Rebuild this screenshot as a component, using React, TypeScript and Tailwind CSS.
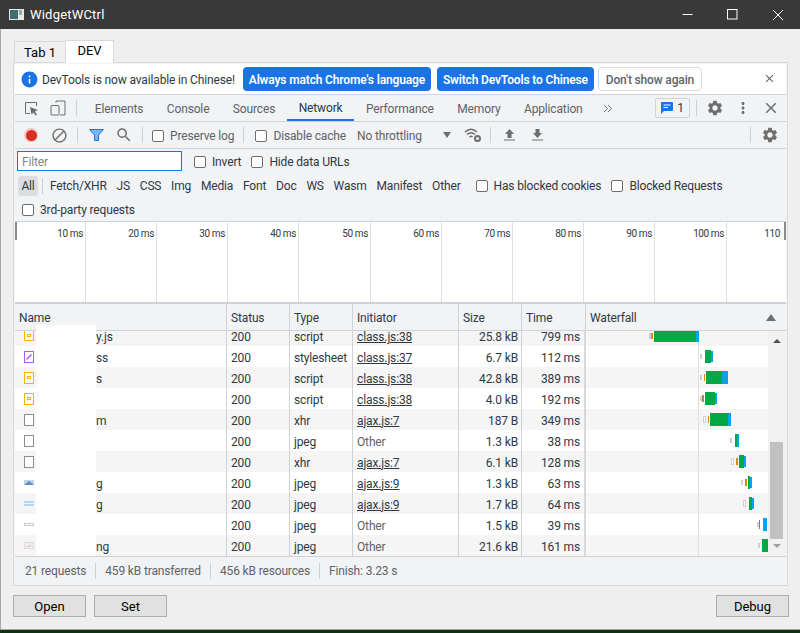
import { MdInfo, MdSettings, MdMoreVert, MdClose, MdBlock, MdSearch } from 'react-icons/md';

type Bar = { x: number; y: number; w: number; h: number; c: string; hollow?: boolean };

const G = '#00a846';
const B = '#00a4f0';
const O = '#d98800';
const L = '#d0d0d0';

// waterfall bars, x is relative to the column, y to the row
const rows: {
  name: string;
  icon: string;
  type: string;
  init: string;
  link: boolean;
  size: string;
  time: string;
  bars: Bar[];
}[] = [
  {
    name: 'y.js', icon: 'js', type: 'script', init: 'class.js:38', link: true, size: '25.8 kB', time: '799 ms',
    bars: [
      { x: 63, y: 2, w: 2, h: 6, c: L }, { x: 65, y: 2, w: 2, h: 6, c: O },
      { x: 68, y: 0, w: 42, h: 11, c: G }, { x: 110, y: 0, w: 3, h: 11, c: B },
    ],
  },
  {
    name: 'ss', icon: 'css', type: 'stylesheet', init: 'class.js:37', link: true, size: '6.7 kB', time: '112 ms',
    bars: [
      { x: 114, y: 8, w: 2, h: 5, c: L }, { x: 119, y: 4, w: 6, h: 13, c: G }, { x: 125, y: 5, w: 2, h: 11, c: B },
    ],
  },
  {
    name: 's', icon: 'js', type: 'script', init: 'class.js:38', link: true, size: '42.8 kB', time: '389 ms',
    bars: [
      { x: 114, y: 8, w: 2, h: 5, c: L }, { x: 118, y: 7, w: 1, h: 7, c: O },
      { x: 120, y: 4, w: 16, h: 13, c: G }, { x: 136, y: 4, w: 6, h: 13, c: '#0f9fe8' },
    ],
  },
  {
    name: '', icon: 'js', type: 'script', init: 'class.js:38', link: true, size: '4.0 kB', time: '192 ms',
    bars: [
      { x: 114, y: 8, w: 2, h: 5, c: L }, { x: 116, y: 7, w: 2, h: 7, c: '#a8865c' },
      { x: 119, y: 4, w: 10, h: 13, c: G }, { x: 129, y: 5, w: 2, h: 11, c: B },
    ],
  },
  {
    name: 'm', icon: 'doc', type: 'xhr', init: 'ajax.js:7', link: true, size: '187 B', time: '349 ms',
    bars: [
      { x: 117, y: 7, w: 3, h: 7, c: '#d0d0d0', hollow: true }, { x: 122, y: 7, w: 1, h: 7, c: O },
      { x: 124, y: 4, w: 18, h: 13, c: G }, { x: 142, y: 4, w: 3, h: 13, c: B },
    ],
  },
  {
    name: '', icon: 'doc', type: 'jpeg', init: 'Other', link: false, size: '1.3 kB', time: '38 ms',
    bars: [
      { x: 144, y: 8, w: 2, h: 5, c: L }, { x: 149, y: 4, w: 2, h: 13, c: G }, { x: 151, y: 4, w: 2, h: 13, c: B },
    ],
  },
  {
    name: '', icon: 'doc', type: 'xhr', init: 'ajax.js:7', link: true, size: '6.1 kB', time: '128 ms',
    bars: [
      { x: 145, y: 7, w: 3, h: 7, c: '#d0d0d0', hollow: true }, { x: 150, y: 7, w: 2, h: 7, c: O },
      { x: 153, y: 4, w: 5, h: 13, c: G }, { x: 158, y: 5, w: 2, h: 11, c: B },
    ],
  },
  {
    name: 'g', icon: 'img1', type: 'jpeg', init: 'ajax.js:9', link: true, size: '1.3 kB', time: '63 ms',
    bars: [
      { x: 155, y: 8, w: 2, h: 5, c: L }, { x: 159, y: 7, w: 2, h: 7, c: O },
      { x: 162, y: 4, w: 2, h: 13, c: G }, { x: 164, y: 5, w: 2, h: 11, c: B },
    ],
  },
  {
    name: 'g', icon: 'img2', type: 'jpeg', init: 'ajax.js:9', link: true, size: '1.7 kB', time: '64 ms',
    bars: [
      { x: 157, y: 7, w: 3, h: 7, c: '#d0d0d0', hollow: true },
      { x: 163, y: 4, w: 3, h: 13, c: G }, { x: 166, y: 5, w: 2, h: 11, c: B },
    ],
  },
  {
    name: '', icon: 'img3', type: 'jpeg', init: 'Other', link: false, size: '1.5 kB', time: '39 ms',
    bars: [
      { x: 171, y: 8, w: 2, h: 5, c: L }, { x: 173, y: 6, w: 1, h: 9, c: '#808080' },
      { x: 177, y: 4, w: 4, h: 13, c: B },
    ],
  },
  {
    name: 'ng', icon: 'img4', type: 'jpeg', init: 'Other', link: false, size: '21.6 kB', time: '161 ms',
    bars: [
      { x: 172, y: 8, w: 2, h: 5, c: L }, { x: 176, y: 4, w: 6, h: 13, c: G },
    ],
  },
];

const ticks = ['10 ms', '20 ms', '30 ms', '40 ms', '50 ms', '60 ms', '70 ms', '80 ms', '90 ms', '100 ms'];
const tickWidths = ['w-[71px]', 'w-[71px]', 'w-[71px]', 'w-[71px]', 'w-[72px]', 'w-[71px]', 'w-[71px]', 'w-[71px]', 'w-[71px]', 'w-[72px]'];
const filters = ['JS', 'CSS', 'Img', 'Media', 'Font', 'Doc', 'WS', 'Wasm', 'Manifest', 'Other'];
const panels = ['Elements', 'Console', 'Sources', 'Network', 'Performance', 'Memory', 'Application'];

const Check = ({ label, className = '' }: { label: string; className?: string }) => (
  <label className={`flex items-center gap-[6px] pt-[2px] ${className}`}>
    <span className="w-[12px] h-[12px] rounded-[2px] border border-[#6e6e6e] bg-white shrink-0" />
    {label}
  </label>
);

const Divider = ({ className = '' }: { className?: string }) => (
  <span className={`w-px h-[16px] bg-[#ccd0d4] shrink-0 ${className}`} />
);

const FileIcon = ({ kind }: { kind: string }) => {
  if (kind === 'js')
    return (
      <span className="w-[10px] h-[12px] border border-[#f4b400] bg-white flex items-center justify-center shrink-0">
        <span className="w-[4px] h-[3px] border border-[#f4b400]" />
      </span>
    );
  if (kind === 'css')
    return (
      <svg width="10" height="12" viewBox="0 0 10 12">
        <rect x="0.5" y="0.5" width="9" height="11" fill="#fff" stroke="#b355f5" />
        <path d="M2.5 8.5 L7.5 3.5" stroke="#b355f5" strokeWidth="1.5" />
      </svg>
    );
  if (kind === 'doc') return <span className="w-[10px] h-[12px] border border-[#8a8d91] bg-white" />;
  if (kind === 'img1')
    return (
      <svg width="10" height="5" viewBox="0 0 10 5">
        <rect width="10" height="5" fill="#c3d3e6" />
        <path d="M0 5 L5 1 L10 5 Z" fill="#5b8dc9" />
      </svg>
    );
  if (kind === 'img2')
    return (
      <svg width="10" height="5" viewBox="0 0 10 5">
        <rect width="10" height="5" fill="#b7d6f0" />
        <rect y="2" width="10" height="1" fill="#f2f7fb" />
      </svg>
    );
  if (kind === 'img3') return <span className="w-[10px] h-[3px] border border-[#c8c8c8] bg-white" />;
  return (
    <svg width="10" height="7" viewBox="0 0 10 7">
      <rect width="10" height="7" fill="#dcdcdc" />
      <rect x="1" y="1" width="8" height="5" fill="#efefef" />
      <path d="M3 5 L7 3" stroke="#d8b8a8" />
    </svg>
  );
};

const Waterfall = ({ bars }: { bars: Bar[] }) => (
  <svg className="w-[182px] h-full shrink-0 block" viewBox="0 0 182 21" preserveAspectRatio="xMinYMin slice">
    <line x1="112.5" y1="0" x2="112.5" y2="21" stroke="#e0e0e0" />
    {bars.map((b, i) =>
      b.hollow ? (
        <rect key={i} x={b.x + 0.5} y={b.y + 0.5} width={b.w - 1} height={b.h - 1} fill="#fff" stroke={b.c} />
      ) : (
        <rect key={i} x={b.x} y={b.y} width={b.w} height={b.h} fill={b.c} />
      ),
    )}
  </svg>
);

const App = () => {
  return (
    <div className="w-[800px] h-[633px] bg-[#0b3312] overflow-hidden" style={{ fontFamily: 'Roboto, "Noto Sans", sans-serif' }}>
      <div className="h-[630px] bg-[#efefef] border-l border-[#a6a6a6] border-b flex flex-col">
        {/* title bar */}
        <div className="h-[29px] bg-[#393939] -ml-px flex items-center shrink-0 text-white text-[13px]">
          <svg className="ml-[9px]" width="15" height="11" viewBox="0 0 15 11">
            <rect width="15" height="11" fill="#e8e8e8" />
            <rect x="1" y="1" width="8" height="9" fill="#3d6f70" />
            <rect x="10" y="1" width="3" height="5" fill="#9aa8a8" />
          </svg>
          <span className="ml-[6px] tracking-[0.2px]">WidgetWCtrl</span>
          <svg className="ml-auto mr-[34px]" width="11" height="11" viewBox="0 0 11 11">
            <path d="M0.5 5.5 H10.5" stroke="#fff" />
          </svg>
          <svg className="mr-[35px]" width="11" height="11" viewBox="0 0 11 11">
            <rect x="0.5" y="0.5" width="9.5" height="9.5" fill="none" stroke="#fff" />
          </svg>
          <svg className="mr-[17px]" width="10" height="10" viewBox="0 0 10 10">
            <path d="M0 0 L10 10 M10 0 L0 10" stroke="#fff" />
          </svg>
        </div>

        {/* tabs */}
        <div className="flex items-end h-[33px] pl-[13px] shrink-0 text-[13px] text-black relative z-10">
          <div className="w-[52px] h-[21px] border border-[#d9d9d9] border-b-0 flex items-center justify-center bg-[#f0f0f0] pt-px">Tab 1</div>
          <div className="w-[49px] h-[23px] -ml-px border border-[#d9d9d9] border-b-white flex items-center justify-center bg-white -mb-px pb-[2px]">DEV</div>
        </div>

        <div className="ml-[12px] mr-[12px] h-[524px] border border-[#d9d9d9] p-px shrink-0 flex flex-col bg-[#f1f3f4] text-[12px] tracking-[-0.15px]">
          {/* language infobar */}
          <div className="h-[31px] bg-white border-b border-[#cfd2d6] flex items-center shrink-0">
            <MdInfo className="ml-[5px] text-[#1a73e8]" size={19} />
            <span className="ml-[3px] pt-px text-[#303942]">DevTools is now available in Chinese!</span>
            <span className="ml-[8px] h-[24px] w-[188px] pt-px rounded-[4px] bg-[#1a73e8] text-white font-semibold flex items-center justify-center">Always match Chrome's language</span>
            <span className="ml-[6px] h-[24px] w-[157px] pt-px rounded-[4px] bg-[#1a73e8] text-white font-semibold flex items-center justify-center">Switch DevTools to Chinese</span>
            <span className="ml-[4px] h-[24px] w-[104px] pt-px rounded-[4px] border border-[#dadce0] text-[#5f6368] font-medium flex items-center justify-center">Don't show again</span>
            <MdClose className="ml-auto mr-[10px] mb-[2px] text-[#5f6368]" size={13} />
          </div>

          {/* panel tabs */}
          <div className="h-[27px] border-b border-[#cfd2d6] flex items-center text-[#5f6368] shrink-0">
            <svg className="ml-[9px]" width="15" height="15" viewBox="0 0 15 15">
              <path d="M6 12.5 H1.5 V1.5 H12.5 V5" fill="none" stroke="#6e6e6e" />
              <path d="M6 6 L14 9 L10.8 10.5 L13 13.5 L11.5 14.5 L9.5 11.5 L7.5 13.5 Z" fill="#6e6e6e" />
            </svg>
            <svg className="ml-[11px]" width="16" height="16" viewBox="0 0 16 16">
              <path d="M6 2.5 V1 H15 V15 H10" fill="none" stroke="#6e6e6e" />
              <rect x="1" y="5.5" width="8" height="9.5" rx="0.5" fill="none" stroke="#6e6e6e" />
            </svg>
            <Divider className="ml-[10px] mr-[6px]" />
            {panels.map((p) => (
              <span
                key={p}
                className={`h-full px-[11.75px] pt-[2px] flex items-center ${p === 'Network' ? 'border-b-2 border-[#1a73e8] text-[#303942]' : ''}`}
              >
                {p}
              </span>
            ))}
            <svg className="ml-[9px]" width="10" height="9" viewBox="0 0 10 9">
              <path d="M1 1 L4.5 4.5 L1 8 M5 1 L8.5 4.5 L5 8" fill="none" stroke="#6e6e6e" />
            </svg>
            <span className="ml-auto w-[35px] h-[20px] border border-[#cfd2d6] rounded-[2px] flex items-center justify-center gap-[4px] text-[#303942]">
              <svg width="12" height="12" viewBox="0 0 12 12">
                <path d="M0 1 Q0 0 1 0 H11 Q12 0 12 1 V8 Q12 9 11 9 H3 L0 12 Z" fill="#1a73e8" />
                <path d="M2.5 3 H9.5 M2.5 5.5 H7" stroke="#fff" />
              </svg>
              1
            </span>
            <Divider className="ml-[6px]" />
            <MdSettings className="ml-[9px] text-[#6e6e6e]" size={18} />
            <MdMoreVert className="ml-[10px] text-[#6e6e6e]" size={18} />
            <MdClose className="ml-[10px] mr-[6px] text-[#6e6e6e]" size={18} />
          </div>

          {/* network toolbar */}
          <div className="h-[27px] border-b border-[#cfd2d6] flex items-center text-[#5f6368] shrink-0">
            <span className="ml-[9px] w-[14px] h-[14px] rounded-full bg-[#f4c4c0] flex items-center justify-center">
              <span className="w-[11px] h-[11px] rounded-full bg-[#d93025]" />
            </span>
            <MdBlock className="ml-[13px] text-[#6e6e6e]" size={17} />
            <Divider className="ml-[9px]" />
            <svg className="ml-[11px]" width="15" height="12" viewBox="0 0 15 12">
              <path d="M0.5 0.5 H14.5 L9.5 6 V11.5 H5.5 V6 Z" fill="#7db5f2" stroke="#1a73e8" />
            </svg>
            <MdSearch className="ml-[11px] text-[#6e6e6e]" size={18} />
            <Divider className="ml-[9px]" />
            <Check className="ml-[9px]" label="Preserve log" />
            <Divider className="ml-[9px]" />
            <Check className="ml-[11px]" label="Disable cache" />
            <span className="ml-[11px] pt-[2px]">No throttling</span>
            <span className="ml-[21px] w-0 h-0 border-x-[4px] border-x-transparent border-t-[6px] border-t-[#6e6e6e]" />
            <svg className="ml-[13px]" width="18" height="15" viewBox="0 0 18 15">
              <path d="M1 4 Q7 -1.5 13 4 M3 6.5 Q7 3 11 6.5 M5.5 9 Q7 7.5 8.5 9" fill="none" stroke="#6e6e6e" strokeWidth="1.5" />
              <circle cx="13.5" cy="10.5" r="2.5" fill="none" stroke="#6e6e6e" strokeWidth="2" />
            </svg>
            <Divider className="ml-[8px]" />
            <svg className="ml-[13px]" width="11" height="12" viewBox="0 0 11 12">
              <path d="M5.5 0 L10 5 H7.5 V9 H3.5 V5 H1 Z" fill="#6e6e6e" />
              <rect y="10.5" width="11" height="1" fill="#6e6e6e" />
            </svg>
            <svg className="ml-[17px]" width="11" height="12" viewBox="0 0 11 12">
              <path d="M3.5 0 H7.5 V4 H10 L5.5 9 L1 4 H3.5 Z" fill="#6e6e6e" />
              <rect y="10.5" width="11" height="1" fill="#6e6e6e" />
            </svg>
            <Divider className="ml-auto" />
            <MdSettings className="ml-[10px] mr-[7px] text-[#6e6e6e]" size={18} />
          </div>

          {/* filter bar */}
          <div className="h-[73px] border-b border-[#cfd2d6] flex flex-col text-[#303942] shrink-0">
            <div className="h-[26px] flex items-center pl-[2px] pb-[2px]">
              <div className="w-[165px] h-[20px] border border-[#1a73e8] bg-white px-[4px] pt-[2px] flex items-center text-[#80868b]">Filter</div>
              <Check className="ml-[12px]" label="Invert" />
              <Check className="ml-[10px]" label="Hide data URLs" />
            </div>
            <div className="h-[23px] flex items-center">
              <span className="ml-[3px] w-[20px] h-[20px] rounded-[3px] bg-[#dcdee1] flex items-center justify-center">All</span>
              <Divider className="ml-[4px] mr-[7px]" />
              <span>Fetch/XHR</span>
              {filters.map((f) => (
                <span key={f} className="ml-[9.75px]">{f}</span>
              ))}
              <Check className="ml-[15px] pt-0!" label="Has blocked cookies" />
              <Check className="ml-[10px] pt-0!" label="Blocked Requests" />
            </div>
            <div className="h-[24px] flex items-center pl-[7px]">
              <Check label="3rd-party requests" />
            </div>
          </div>

          {/* overview */}
          <div className="h-[80px] bg-white flex relative shrink-0 overflow-hidden text-[10px] tracking-[-0.4px] text-[#303942]">
            {ticks.map((t, i) => (
              <div key={t} className={`${tickWidths[i]} h-full border-r border-[#dfe1e5] text-right pr-[2px] pt-[4px] shrink-0`}>{t}</div>
            ))}
            <div className="flex-1 text-right pr-[6px] pt-[4px]">110</div>
            <span className="absolute left-0 top-0 w-[2px] h-[18px] bg-[#8c8c8c]" />
            <span className="absolute right-0 top-0 w-[2px] h-[18px] bg-[#8c8c8c]" />
          </div>

          {/* table */}
          <div className="flex-1 min-h-0 flex flex-col border-t-2 border-[#cfd2d6] relative text-[#303942]">
            <div className="h-[27px] flex border-b border-[#cfd2d6] shrink-0 items-center">
              <div className="w-[212px] pl-[4px] pt-[2px] h-full flex items-center border-r border-[#cfd2d6] shrink-0">Name</div>
              <div className="w-[63px] pl-[4px] pt-[2px] h-full flex items-center border-r border-[#cfd2d6] shrink-0">Status</div>
              <div className="w-[63px] pl-[4px] pt-[2px] h-full flex items-center border-r border-[#cfd2d6] shrink-0">Type</div>
              <div className="w-[106px] pl-[4px] pt-[2px] h-full flex items-center border-r border-[#cfd2d6] shrink-0">Initiator</div>
              <div className="w-[63px] pl-[4px] pt-[2px] h-full flex items-center border-r border-[#cfd2d6] shrink-0">Size</div>
              <div className="w-[64px] pl-[4px] pt-[2px] h-full flex items-center border-r border-[#cfd2d6] shrink-0">Time</div>
              <div className="flex-1 pl-[4px] pr-[10px] h-full flex items-center justify-between">
                <span className="pt-[2px]">Waterfall</span>
                <span className="w-0 h-0 border-x-[5px] border-x-transparent border-b-[7px] border-b-[#6e6e6e]" />
              </div>
            </div>

            <div className="h-[225px] flex shrink-0 overflow-hidden">
              <div className="w-[753px] shrink-0 overflow-hidden">
                {rows.map((r, i) => {
                  const first = i === 0;
                  const cell = first ? 'items-start leading-[12px]' : 'items-center pt-[2px]';
                  return (
                    <div
                      key={i}
                      className={`flex items-stretch ${first ? 'h-[15px]' : 'h-[21px]'} ${i % 2 === 0 ? 'bg-[#f5f5f5]' : 'bg-white'}`}
                    >
                      <div className={`w-[212px] border-r border-[#cfd2d6] shrink-0 flex ${first ? 'items-start leading-[12px]' : 'items-center'}`}>
                        <span className={`ml-[9px] shrink-0 flex ${first ? 'h-[10px] overflow-hidden items-end' : ''}`}><FileIcon kind={r.icon} /></span>
                        <span className={`ml-[62px] ${first ? '' : 'pt-[2px]'}`}>{r.name}</span>
                      </div>
                      <div className={`w-[63px] pl-[4px] border-r border-[#cfd2d6] shrink-0 flex ${cell}`}>200</div>
                      <div className={`w-[63px] pl-[4px] border-r border-[#cfd2d6] shrink-0 flex ${cell}`}>{r.type}</div>
                      <div className={`w-[106px] pl-[4px] border-r border-[#cfd2d6] shrink-0 flex ${cell}`}>
                        <span className={r.link ? 'underline' : 'text-[#5f6368]'}>{r.init}</span>
                      </div>
                      <div className={`w-[63px] pr-[3px] justify-end border-r border-[#cfd2d6] shrink-0 flex ${cell}`}>{r.size}</div>
                      <div className={`w-[64px] pr-[4px] justify-end border-r-2 border-[#d8d8d8] shrink-0 flex ${cell}`}>{r.time}</div>
                      <Waterfall bars={r.bars} />
                    </div>
                  );
                })}
              </div>
              {/* scrollbar */}
              <div className="w-[17px] bg-[#f1f1f1] flex flex-col items-center shrink-0">
                <span className="mt-[8px] w-0 h-0 border-x-[4px] border-x-transparent border-b-[4px] border-b-[#505050]" />
                <span className="mt-[99px] w-[13px] h-[97px] bg-[#c1c1c1]" />
                <span className="mt-[5px] w-0 h-0 border-x-[4px] border-x-transparent border-t-[4px] border-t-[#a0a0a0]" />
              </div>
            </div>

            {/* status bar */}
            <div className="flex-1 border-t border-[#cfd2d6] flex items-center text-[#5f6368] pl-[10px]">
              <span>21 requests</span>
              <Divider className="mx-[9px]" />
              <span>459 kB transferred</span>
              <Divider className="mx-[9px]" />
              <span>456 kB resources</span>
              <Divider className="mx-[9px]" />
              <span>Finish: 3.23 s</span>
            </div>

            {/* redacted names */}
            <span className="absolute left-[21px] top-[21px] w-[60px] h-[231px] bg-white" />
          </div>
        </div>

        {/* bottom buttons */}
        <div className="flex items-start pt-[9px] pl-[12px] pr-[11px] text-[13px] text-black">
          <button className="w-[73px] h-[22px] pt-px bg-[#e1e1e1] border border-[#adadad]">Open</button>
          <button className="ml-[8px] w-[73px] h-[22px] pt-px bg-[#e1e1e1] border border-[#adadad]">Set</button>
          <button className="ml-auto w-[73px] h-[22px] pt-px bg-[#e1e1e1] border border-[#adadad]">Debug</button>
        </div>
      </div>
    </div>
  );
};

export default App;
